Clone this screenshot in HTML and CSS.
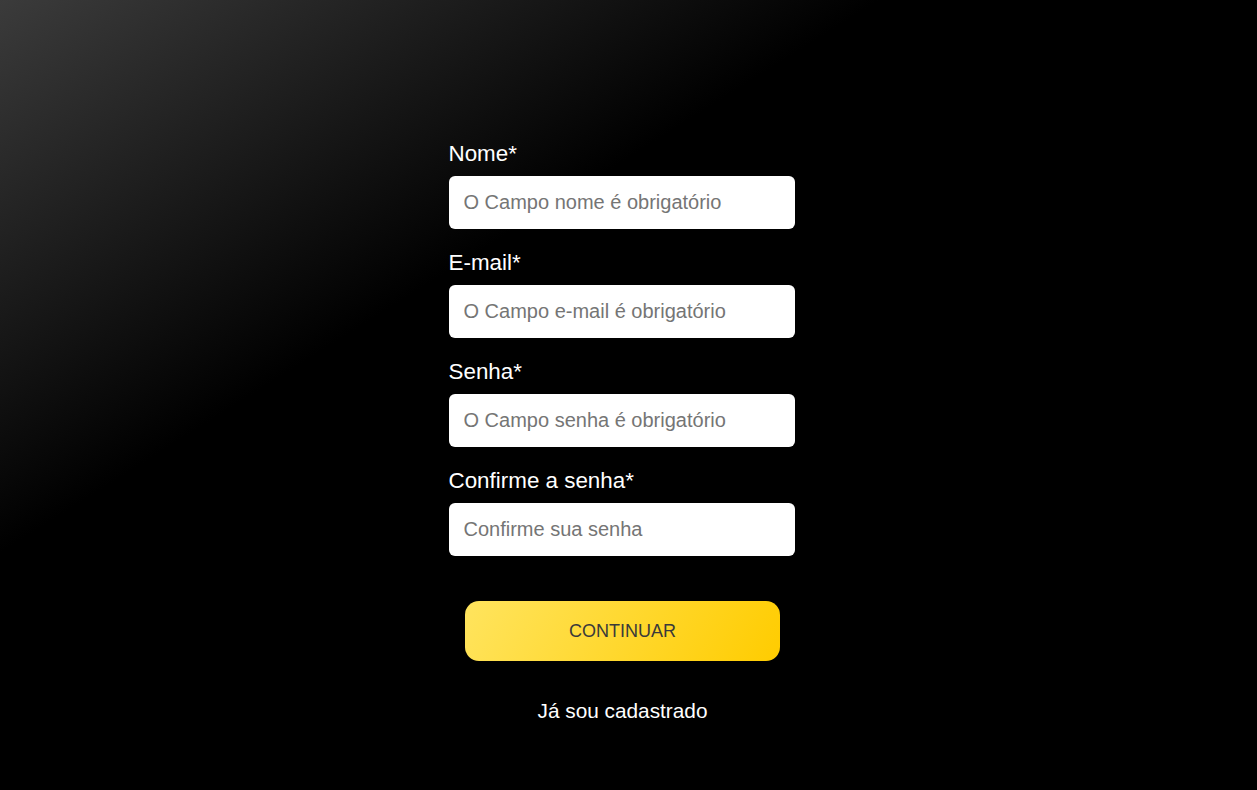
FILE: index.html
```html
<!DOCTYPE html>
<html lang="pt-BR">
<head>
<meta charset="utf-8">
<title>Cadastro</title>
<link rel="stylesheet" href="styles.css">
</head>
<body>
<main class="page">
  <form class="form">
    <div class="field">
      <label class="label" for="nome">Nome*</label>
      <input class="input" id="nome" type="text" placeholder="O Campo nome é obrigatório">
    </div>
    <div class="field">
      <label class="label" for="email">E-mail*</label>
      <input class="input" id="email" type="email" placeholder="O Campo e-mail é obrigatório">
    </div>
    <div class="field">
      <label class="label" for="senha">Senha*</label>
      <input class="input" id="senha" type="password" placeholder="O Campo senha é obrigatório">
    </div>
    <div class="field">
      <label class="label" for="confirma">Confirme a senha*</label>
      <input class="input" id="confirma" type="password" placeholder="Confirme sua senha">
    </div>
    <div class="actions">
      <button class="btn" type="button">CONTINUAR</button>
      <a class="link" href="#">Já sou cadastrado</a>
    </div>
  </form>
</main>
</body>
</html>
```
FILE: styles.css
```css
html, body {
  margin: 0;
  padding: 0;
  height: 100%;
}

body {
  background: linear-gradient(to bottom right, #3b3b3b 0%, #000 35%, #000 100%);
  font-family: "Liberation Sans", Arial, sans-serif;
  color: #fff;
}

.page {
  display: flex;
  justify-content: center;
  padding-top: 141px;
}

.form {
  width: 360px;
  display: flex;
  flex-direction: column;
  gap: 21px;
}

.field {
  width: 346px;
  display: flex;
  flex-direction: column;
  gap: 10px;
}

.label {
  font-size: 22.4px;
  line-height: 25px;
  color: #fff;
}

.input {
  box-sizing: border-box;
  width: 346px;
  height: 53px;
  padding: 0 15px;
  border: none;
  border-radius: 6px;
  background: #fff;
  font-family: "Liberation Sans", Arial, sans-serif;
  font-size: 20px;
  color: #333;
  outline: none;
}

.input::placeholder {
  color: #757575;
}

.actions {
  width: 346px;
  display: flex;
  flex-direction: column;
  align-items: center;
  padding-top: 24px;
  padding-left: 1px;
  gap: 38px;
}

.btn {
  width: 315px;
  height: 60px;
  border: none;
  border-radius: 14px;
  background: linear-gradient(120deg, #ffe45e 0%, #ffcc00 100%);
  font-family: "Liberation Sans", Arial, sans-serif;
  font-size: 18px;
  color: #3a3a3a;
  cursor: pointer;
}

.link {
  font-size: 20.8px;
  line-height: 23px;
  color: #fff;
  text-decoration: none;
}
```
